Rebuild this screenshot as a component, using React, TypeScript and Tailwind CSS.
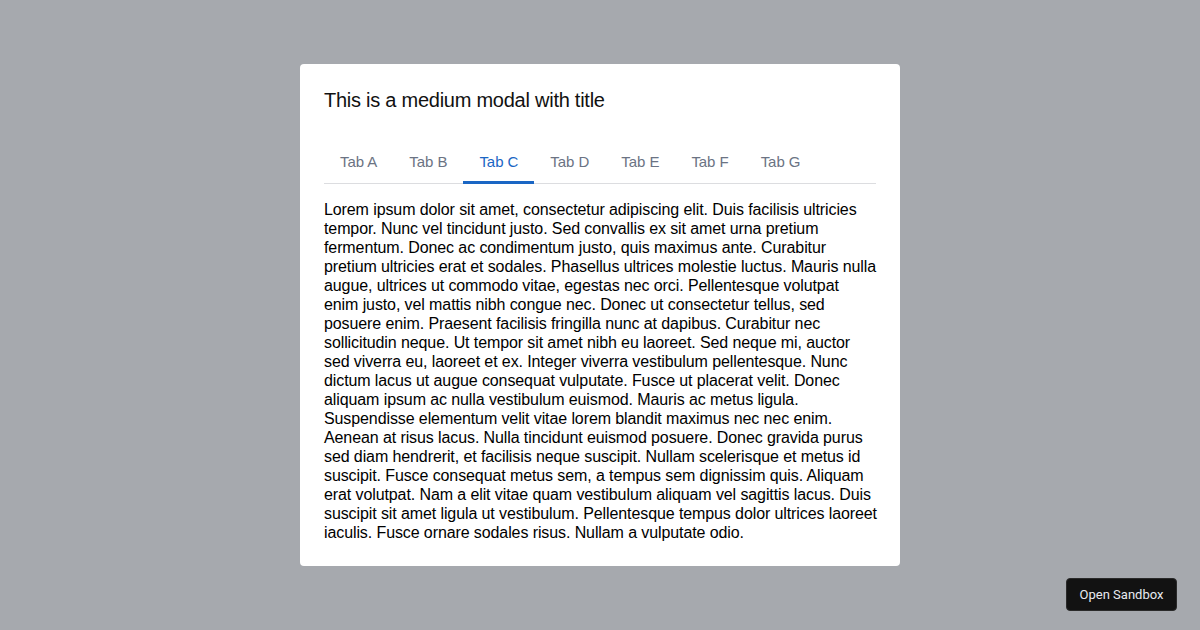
import { useState } from "react";

const tabs = ["Tab A", "Tab B", "Tab C", "Tab D", "Tab E", "Tab F", "Tab G"];

// lines broken the same way as the design
const lines = [
  "Lorem ipsum dolor sit amet, consectetur adipiscing elit. Duis facilisis ultricies",
  "tempor. Nunc vel tincidunt justo. Sed convallis ex sit amet urna pretium",
  "fermentum. Donec ac condimentum justo, quis maximus ante. Curabitur",
  "pretium ultricies erat et sodales. Phasellus ultrices molestie luctus. Mauris nulla",
  "augue, ultrices ut commodo vitae, egestas nec orci. Pellentesque volutpat",
  "enim justo, vel mattis nibh congue nec. Donec ut consectetur tellus, sed",
  "posuere enim. Praesent facilisis fringilla nunc at dapibus. Curabitur nec",
  "sollicitudin neque. Ut tempor sit amet nibh eu laoreet. Sed neque mi, auctor",
  "sed viverra eu, laoreet et ex. Integer viverra vestibulum pellentesque. Nunc",
  "dictum lacus ut augue consequat vulputate. Fusce ut placerat velit. Donec",
  "aliquam ipsum ac nulla vestibulum euismod. Mauris ac metus ligula.",
  "Suspendisse elementum velit vitae lorem blandit maximus nec nec enim.",
  "Aenean at risus lacus. Nulla tincidunt euismod posuere. Donec gravida purus",
  "sed diam hendrerit, et facilisis neque suscipit. Nullam scelerisque et metus id",
  "suscipit. Fusce consequat metus sem, a tempus sem dignissim quis. Aliquam",
  "erat volutpat. Nam a elit vitae quam vestibulum aliquam vel sagittis lacus. Duis",
  "suscipit sit amet ligula ut vestibulum. Pellentesque tempus dolor ultrices laoreet",
  "iaculis. Fusce ornare sodales risus. Nullam a vulputate odio.",
];

export default function App() {
  const [active, setActive] = useState(2);

  return (
    <div className="relative flex h-[630px] w-[1200px] justify-center bg-[#a6a9ae] pt-16 font-['Liberation_Sans',Arial,sans-serif]">
      {/* modal */}
      <div className="h-fit w-[600px] rounded bg-white px-6 pt-6 pb-6">
        <h2 className="text-[20px] leading-6 tracking-[-0.25px] text-[#111]">This is a medium modal with title</h2>

        {/* tabs */}
        <div className="mt-7 flex border-b border-[#dcdde0]">
          {tabs.map((tab, i) => (
            <button
              key={tab}
              onClick={() => setActive(i)}
              className={
                i === active
                  ? "-mb-px h-[44px] border-b-[3px] border-[#1a66c4] px-4 pt-[3px] text-[15px] tracking-[-0.05px] text-[#1a66c4]"
                  : "-mb-px h-[44px] border-b-[3px] border-transparent px-4 pt-[3px] text-[15px] tracking-[-0.05px] text-[#6b7383]"
              }
            >
              {tab}
            </button>
          ))}
        </div>

        <p className="mt-[16px] text-[16px] leading-[19px] tracking-[-0.1px] text-black">
          {lines.map((l) => (
            <span key={l} className="block whitespace-nowrap">
              {l}
            </span>
          ))}
        </p>
      </div>

      {/* sandbox button */}
      <button className="absolute right-[23px] bottom-[19px] h-[33px] w-[111px] rounded-[4px] border border-[#2a2a2a] bg-[#121212] font-['Roboto',sans-serif] text-[13px] text-[#e8eaf0]">
        Open Sandbox
      </button>
    </div>
  );
}
